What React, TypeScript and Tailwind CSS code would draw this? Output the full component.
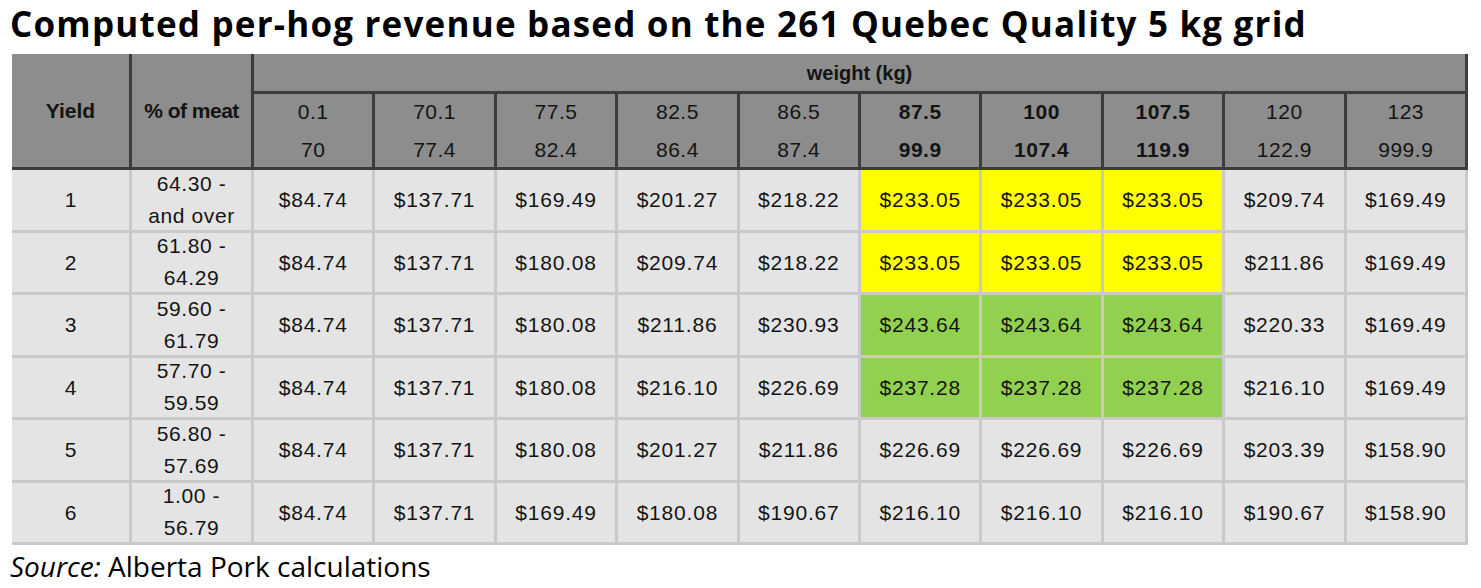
import { Fragment } from 'react'

const weights: { from: string; to: string; bold?: boolean }[] = [
  { from: '0.1', to: '70' },
  { from: '70.1', to: '77.4' },
  { from: '77.5', to: '82.4' },
  { from: '82.5', to: '86.4' },
  { from: '86.5', to: '87.4' },
  { from: '87.5', to: '99.9', bold: true },
  { from: '100', to: '107.4', bold: true },
  { from: '107.5', to: '119.9', bold: true },
  { from: '120', to: '122.9' },
  { from: '123', to: '999.9' },
]

type Row = {
  yieldClass: string
  meat: [string, string]
  prices: string[]
  highlight?: 'yellow' | 'green'
}

const rows: Row[] = [
  {
    yieldClass: '1',
    meat: ['64.30 -', 'and over'],
    prices: ['84.74', '137.71', '169.49', '201.27', '218.22', '233.05', '233.05', '233.05', '209.74', '169.49'],
    highlight: 'yellow',
  },
  {
    yieldClass: '2',
    meat: ['61.80 -', '64.29'],
    prices: ['84.74', '137.71', '180.08', '209.74', '218.22', '233.05', '233.05', '233.05', '211.86', '169.49'],
    highlight: 'yellow',
  },
  {
    yieldClass: '3',
    meat: ['59.60 -', '61.79'],
    prices: ['84.74', '137.71', '180.08', '211.86', '230.93', '243.64', '243.64', '243.64', '220.33', '169.49'],
    highlight: 'green',
  },
  {
    yieldClass: '4',
    meat: ['57.70 -', '59.59'],
    prices: ['84.74', '137.71', '180.08', '216.10', '226.69', '237.28', '237.28', '237.28', '216.10', '169.49'],
    highlight: 'green',
  },
  {
    yieldClass: '5',
    meat: ['56.80 -', '57.69'],
    prices: ['84.74', '137.71', '180.08', '201.27', '211.86', '226.69', '226.69', '226.69', '203.39', '158.90'],
  },
  {
    yieldClass: '6',
    meat: ['1.00 -', '56.79'],
    prices: ['84.74', '137.71', '169.49', '180.08', '190.67', '216.10', '216.10', '216.10', '190.67', '158.90'],
  },
]

function cellBg(row: Row, i: number) {
  const inBand = i >= 5 && i <= 7
  if (inBand && row.highlight === 'yellow') return 'bg-[#ffff00]'
  if (inBand && row.highlight === 'green') return 'bg-[#92d050]'
  return 'bg-[#e4e4e4]'
}

export default function App() {
  return (
    <div className="w-[1481px] h-[588px] bg-white overflow-hidden pl-[12px]">
      {/* Title */}
      <h1 className="-ml-[2px] h-[54px] font-['Open_Sans',sans-serif] text-[35px] font-bold leading-[48px] tracking-[1.2px] text-black whitespace-nowrap">
        Computed per-hog revenue based on the 261 Quebec Quality 5 kg grid
      </h1>

      <div className="w-[1456px] font-['Liberation_Sans',Arial,sans-serif] text-[21px] text-[#141414]">
        {/* Header */}
        <div className="grid grid-cols-[117px_119px_repeat(10,1fr)] grid-rows-[37px_73px] gap-[3px] bg-[#3c3c3c] pr-[3px] pb-[3px]">
          <div className="row-span-2 flex items-center justify-center bg-[#8d8d8d] font-bold">Yield</div>
          <div className="row-span-2 flex items-center justify-center bg-[#8d8d8d] font-bold tracking-[-0.5px]">% of meat</div>
          <div className="col-span-10 flex items-center justify-center bg-[#8d8d8d] text-[20px] font-bold">weight (kg)</div>
          {weights.map((w) => (
            <div
              key={w.from}
              className={`flex flex-col items-center justify-center overflow-hidden bg-[#8d8d8d] tracking-[0.5px] ${w.bold ? 'font-bold' : ''}`}
            >
              <div className="h-[38px] shrink-0 leading-[38px]">{w.from}</div>
              <div className="h-[38px] shrink-0 leading-[38px]">{w.to}</div>
            </div>
          ))}
        </div>

        {/* Body */}
        <div className="grid grid-cols-[117px_119px_repeat(10,1fr)] auto-rows-[59.5px] gap-[3px] bg-[#c9c9c9] pr-[3px] pb-[3px]">
          {rows.map((row) => (
            <Fragment key={row.yieldClass}>
              <div className="flex items-center justify-center bg-[#e4e4e4]">{row.yieldClass}</div>
              <div className="flex flex-col items-center justify-center overflow-hidden bg-[#e4e4e4] tracking-[0.6px]">
                <div className="shrink-0 leading-[32px]">{row.meat[0]}</div>
                <div className="shrink-0 leading-[32px]">{row.meat[1]}</div>
              </div>
              {row.prices.map((p, i) => (
                <div key={i} className={`flex items-center justify-center tracking-[0.8px] ${cellBg(row, i)}`}>
                  ${p}
                </div>
              ))}
            </Fragment>
          ))}
        </div>
      </div>

      {/* Source */}
      <p className="-ml-[2px] mt-[3px] font-['Open_Sans',sans-serif] text-[28px] leading-[36px] text-black">
        <i>Source:</i> Alberta Pork calculations
      </p>
    </div>
  )
}
